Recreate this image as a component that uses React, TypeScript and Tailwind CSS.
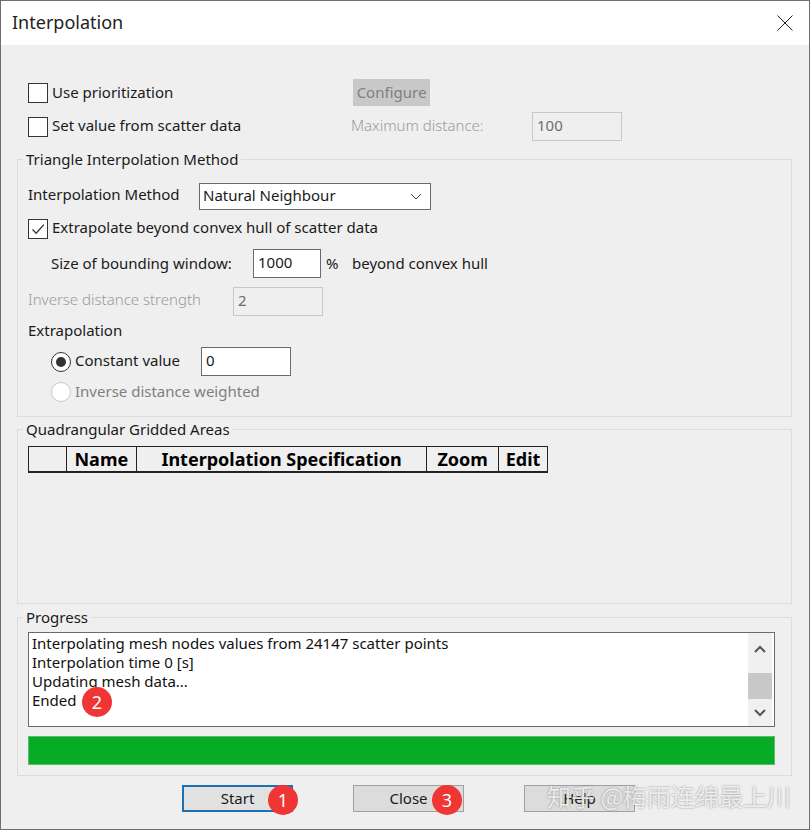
import React from "react";

function Legend({ children }: { children: React.ReactNode }) {
  return (
    <span className="absolute left-[5px] top-[-12px] bg-[#efefef] px-[3px] text-[15px] leading-[22px] text-[#1a1a1a]">
      {children}
    </span>
  );
}

function Check({ checked }: { checked?: boolean }) {
  return (
    <span className="flex h-[20px] w-[20px] shrink-0 items-center justify-center border border-[#333] bg-white">
      {checked && (
        <svg width="16" height="16" viewBox="0 0 16 16" fill="none">
          <path d="M2.5 8.5 L6.2 12.2 L13.8 3.6" stroke="#333" strokeWidth="1.3" />
        </svg>
      )}
    </span>
  );
}

function Badge({ n, className }: { n: number; className: string }) {
  return (
    <span
      className={`absolute flex h-[30px] w-[30px] items-center justify-center rounded-full bg-[#f03535] text-[18px] text-white ${className}`}
    >
      {n}
    </span>
  );
}

const cols: [string, string][] = [
  ["", "w-[38px]"],
  ["Name", "w-[70px]"],
  ["Interpolation Specification", "w-[291px]"],
  ["Zoom", "w-[72px]"],
  ["Edit", "w-[49px]"],
];

export default function App() {
  return (
    <div className="h-[830px] w-[810px] overflow-hidden border border-[#6e6e6e] bg-[#efefef] font-['Noto_Sans',sans-serif] text-[15px] leading-[22px] text-[#1a1a1a]">
      <div className="flex h-[44px] items-center justify-between bg-white pl-[11px] pr-[16px]">
        <span className="-translate-y-px text-[18px] text-[#222]">Interpolation</span>
        <svg width="16" height="16" viewBox="0 0 16 16" stroke="#222" strokeWidth="1" fill="none">
          <path d="M0.5 0.5 L15.5 15.5 M15.5 0.5 L0.5 15.5" />
        </svg>
      </div>

      <div className="px-[16px]">
        <div className="mt-[34px] flex h-[27px] items-center pl-[11px]">
          <Check />
          <span className="ml-[4px] w-[301px] -translate-y-px">Use prioritization</span>
          <span className="flex h-[27px] w-[77px] items-center justify-center bg-[#c8c8c8] pb-[2px] text-[#7f7f7f]">Configure</span>
        </div>
        <div className="mt-[6px] flex h-[29px] items-center pl-[11px]">
          <Check />
          <span className="ml-[4px] mt-[-2px] w-[299px] -translate-y-px">Set value from scatter data</span>
          <span className="mt-[-2px] w-[181px] -translate-y-px font-light text-[#9a9a9a]">Maximum distance:</span>
          <span className="flex h-[29px] w-[90px] items-center border border-[#c8c8c8] pb-[4px] pl-[4px] text-[#6d6d6d]">100</span>
        </div>

        <section className="relative mt-[18px] h-[258px] w-[775px] border border-[#dcdcdc] px-[10px] pt-[23px]">
          <Legend>Triangle Interpolation Method</Legend>
          <div className="flex h-[27px] items-center">
            <span className="mt-[-2px] w-[171px] -translate-y-[2px]">Interpolation Method</span>
            <div className="flex h-[27px] w-[232px] items-center justify-between border border-[#6a6a6a] bg-white pl-[3px] pr-[8px]">
              <span className="mt-[-1px] -translate-y-px">Natural Neighbour</span>
              <svg width="12" height="7" viewBox="0 0 12 7" fill="none" stroke="#444" strokeWidth="1">
                <path d="M1 1 L6 6 L11 1" />
              </svg>
            </div>
          </div>
          <div className="mt-[9px] flex h-[19px] items-center">
            <Check checked />
            <span className="ml-[4px] mt-[-1px] -translate-y-px">Extrapolate beyond convex hull of scatter data</span>
          </div>
          <div className="mt-[11px] flex h-[29px] items-center pl-[23px]">
            <span className="w-[202px] -translate-y-px">Size of bounding window:</span>
            <span className="flex h-[29px] w-[68px] items-center border border-[#6a6a6a] bg-white pb-[4px] pl-[4px]">1000</span>
            <span className="ml-[5px] w-[26px] -translate-y-px">%</span>
            <span className="-translate-y-px">beyond convex hull</span>
          </div>
          <div className="mt-[9px] flex h-[29px] items-center">
            <span className="mt-[-2px] w-[205px] -translate-y-[2px] font-light text-[#9a9a9a]">Inverse distance strength</span>
            <span className="flex h-[29px] w-[90px] items-center border border-[#c8c8c8] pb-[4px] pl-[4px] text-[#6d6d6d]">2</span>
          </div>
          <div className="mt-[4px] flex h-[22px] -translate-y-px items-center">Extrapolation</div>
          <div className="mt-[5px] flex h-[29px] items-center pl-[23px]">
            <span className="flex h-[20px] w-[20px] items-center justify-center rounded-full border border-[#333] bg-white">
              <span className="h-[10px] w-[10px] rounded-full bg-[#333]" />
            </span>
            <span className="ml-[4px] mt-[-1px] w-[126px] -translate-y-px">Constant value</span>
            <span className="flex h-[29px] w-[90px] items-center border border-[#6a6a6a] bg-white pb-[4px] pl-[4px]">0</span>
          </div>
          <div className="mt-[6px] flex h-[20px] items-center pl-[23px]">
            <span className="h-[20px] w-[20px] rounded-full border border-[#c8c8c8] bg-white" />
            <span className="ml-[4px] -translate-y-px text-[#7f7f7f]">Inverse distance weighted</span>
          </div>
        </section>

        <section className="relative mt-[12px] h-[175px] w-[775px] border border-[#dcdcdc] px-[10px] pt-[16px]">
          <Legend>Quadrangular Gridded Areas</Legend>
          <div className="flex h-[27px] w-[520px] border-t border-b-2 border-l border-[#222]">
            {cols.map(([label, w]) => (
              <span
                key={label || "blank"}
                className={`flex items-center justify-center border-r border-[#222] text-[18px] font-bold text-black ${w}`}
              >
                {label}
              </span>
            ))}
          </div>
        </section>

        <section className="relative mt-[13px] h-[159px] w-[775px] border border-[#dcdcdc] px-[10px] pt-[14px]">
          <Legend>Progress</Legend>
          <div className="relative flex h-[95px] w-[747px] border border-[#6a6a6a] bg-white">
            <div className="flex-1 pl-[3px] pt-[1px] leading-[19px] text-[#111]">
              <div>Interpolating mesh nodes values from 24147 scatter points</div>
              <div>Interpolation time 0 [s]</div>
              <div>Updating mesh data...</div>
              <div>Ended</div>
            </div>
            <div className="mr-[2px] flex w-[24px] flex-col bg-[#f0f0f0]">
              <div className="flex h-[40px] w-full items-start justify-center pt-[12px]">
                <svg width="12" height="8" viewBox="0 0 12 8" fill="none" stroke="#555" strokeWidth="2">
                  <path d="M1 7 L6 2 L11 7" />
                </svg>
              </div>
              <div className="h-[26px] w-full bg-[#c8c8c8]" />
              <div className="flex w-full flex-1 items-center justify-center">
                <svg width="12" height="8" viewBox="0 0 12 8" fill="none" stroke="#555" strokeWidth="2">
                  <path d="M1 1 L6 6 L11 1" />
                </svg>
              </div>
            </div>
            <Badge n={2} className="left-[53px] top-[54px]" />
          </div>
          <div className="mt-[9px] h-[29px] w-[747px] border border-[#5dbb6c] bg-[#06ac26]" />
        </section>

        <div className="relative mt-[9px] flex h-[27px] pl-[165px]">
          <div className="relative mr-[60px] flex h-[27px] w-[111px] items-center justify-center border-2 border-[#1f6fb5] bg-[#e1e1e1] pb-[2px]">
            Start
            <Badge n={1} className="right-[-7px] top-[-2px]" />
          </div>
          <div className="relative mr-[60px] flex h-[27px] w-[111px] items-center justify-center border border-[#a0a0a0] bg-[#dcdcdc] pb-[2px]">
            Close
            <Badge n={3} className="right-[1px] top-[-1px]" />
          </div>
          <div className="flex h-[27px] w-[111px] items-center justify-center border border-[#a0a0a0] bg-[#dcdcdc] pb-[2px]">Help</div>
          <span className="absolute left-[530px] top-[-3px] whitespace-nowrap font-['Noto_Sans_CJK_SC','Noto_Sans',sans-serif] text-[24px] leading-[28px] text-white/80 [text-shadow:0_0_2px_rgba(90,90,90,0.7)]">
            知乎 @梅雨连绵最上川
          </span>
        </div>
      </div>
    </div>
  );
}
